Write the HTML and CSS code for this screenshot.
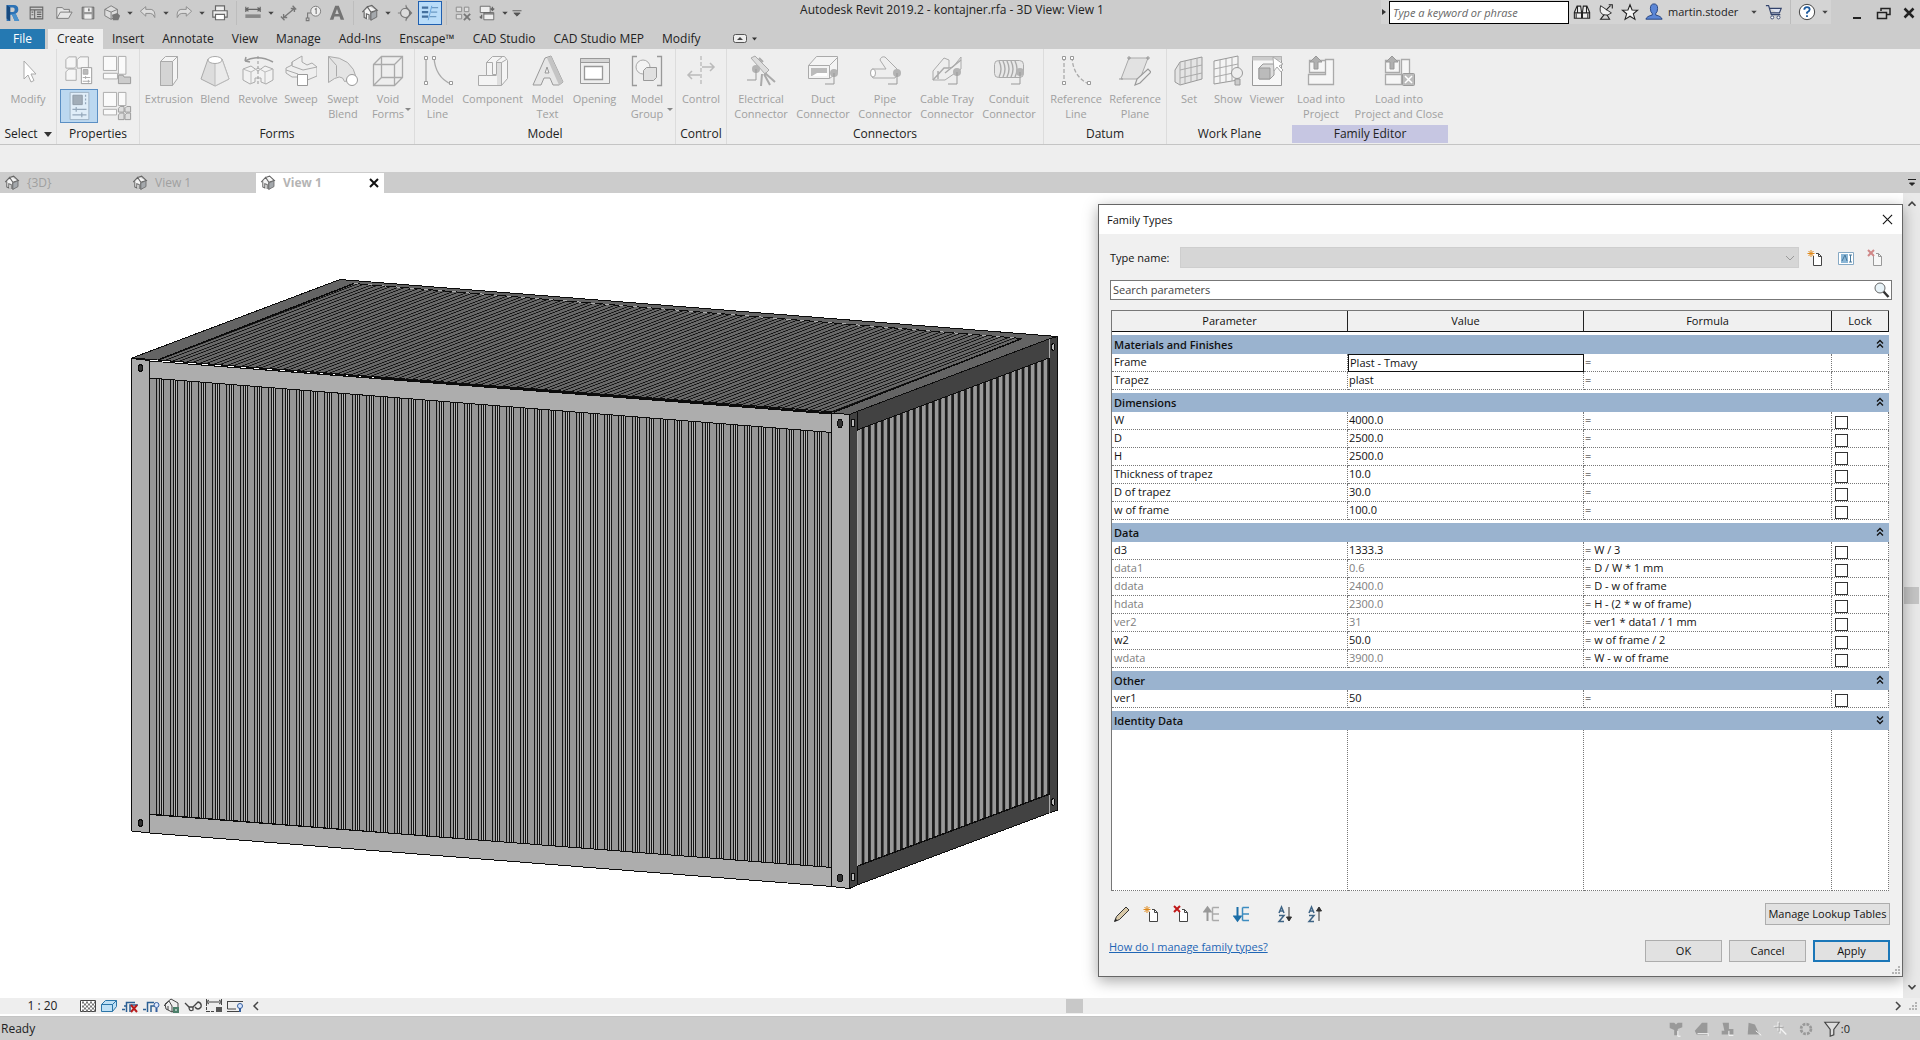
FILE: index.html
```html
<!DOCTYPE html>
<html lang="en">
<head>
<meta charset="utf-8">
<title>Autodesk Revit 2019.2 - kontajner.rfa - 3D View: View 1</title>
<link rel="stylesheet" href="styles.css">
</head>
<body>
<svg class="defs" aria-hidden="true">
  <symbol id="caret" viewBox="0 0 12 20"><path d="M3 8.500h6l-3 3.500z" fill="#444"/></symbol>
  <symbol id="house" viewBox="0 0 20 20"><path d="M3 8l7-5 7 4v7l-7 4-6-3z" fill="#f4f4f4"/><path d="M1.500 9L7 3l4 6v9M7 3l5-1.500L18 7l-7 2M3.500 8v7l2.500 1.200V11l3 1v5.500" fill="none" stroke="#666" stroke-width="1.300"/><path d="M11 10l6.500-3v7.500L11 18z" fill="#a4a8ac" stroke="#666"/></symbol>
  <symbol id="up2" viewBox="0 0 10 12"><path d="M2 5.500l3-3 3 3M2 9.500l3-3 3 3" fill="none" stroke="#111" stroke-width="1.300"/></symbol>
  <symbol id="page" viewBox="0 0 18 18"><path d="M6.500 4.500h5l3 3v9h-8z" fill="#fff"/><path d="M6.500 7v9.500h8v-9l-3-3H9M11.500 4.500v3h3" fill="none" stroke="#444"/></symbol>
  <symbol id="grip" viewBox="0 0 10 10"><path d="M7 1h2v2h-2zM4 4h2v2h-2zM7 4h2v2h-2zM1 7h2v2h-2zM4 7h2v2h-2zM7 7h2v2h-2z" fill="#b4b4b4"/></symbol>
</svg>

<header class="titlebar">
  <div class="qat">
    <button aria-label="Revit"><svg viewBox="0 0 20 20"><path d="M4 1h8q5 0 5 5 0 3.500-3 4.500l4 8.500h-5l-3-7H8v7H4zM8 4v5h3q2 0 2-2.500T11 4z" fill="#2d72b5"/><path d="M4 1l4 3v15l-4-3z" fill="#174a80"/><path d="M8 12l2 0 3 7h5l-4-8.500z" fill="#4b91cc"/></svg></button>
    <button aria-label="Home"><svg viewBox="0 0 20 20"><path d="M3.500 3.500h14v13h-14zM3.500 6.500h14M8.500 7v9.500M11 9h5M11 11.500h5M11 14h5M5 9h2M5 12h2" fill="none" stroke="#666" stroke-width="1.200"/></svg></button>
    <span class="sp"></span>
    <button aria-label="Open"><svg viewBox="0 0 20 20"><path d="M2 16V4h6l2 2h6v3M2 16l4-7h13l-4 7z" fill="#e6e6e6" stroke="#777"/></svg></button>
    <button aria-label="Save"><svg viewBox="0 0 20 20"><path d="M3.500 3.500h13v13h-13z" fill="#999" stroke="#666"/><path d="M6 4h8v5H6zM6 11.500h8v5H6z" fill="#eee"/><path d="M11 5v3" stroke="#666" stroke-width="1.500"/></svg></button>
    <button aria-label="Synchronize"><svg viewBox="0 0 20 20"><path d="M2 6l7-4 7 4v7l-7 4-7-4z" fill="#ddd" stroke="#777"/><path d="M2 6l7 3 7-3M9 9v8" fill="none" stroke="#777"/><path d="M10 12l6-2 3 3-2 5h-6z" fill="#777"/></svg></button>
    <button class="dd" aria-label="Synchronize options"><svg><use href="#caret"/></svg></button>
    <button aria-label="Undo"><svg viewBox="0 0 20 20"><path d="M1.500 8l6-5v3h6q5 1 4 9-2-5-5-4.500h-5v3z" fill="#ddd" stroke="#888"/></svg></button>
    <button class="dd" aria-label="Undo list"><svg><use href="#caret"/></svg></button>
    <button aria-label="Redo"><svg viewBox="0 0 20 20"><path d="M18.500 8l-6-5v3h-6q-5 1-4 9 2-5 5-4.500h5v3z" fill="#ddd" stroke="#888"/></svg></button>
    <button class="dd" aria-label="Redo list"><svg><use href="#caret"/></svg></button>
    <button aria-label="Print"><svg viewBox="0 0 20 20"><path d="M5 7V2h10v5M2 7.500h16v7H2z" fill="#eee" stroke="#666" stroke-width="1.300"/><path d="M5 11.500h10v6H5z" fill="#fff" stroke="#666" stroke-width="1.300"/></svg></button>
    <span class="sep"></span>
    <button aria-label="Measure"><svg viewBox="0 0 20 20"><path d="M2 6h16M2 3v6M18 3v6M5 4L2 6l3 2M15 4l3 2-3 2" fill="none" stroke="#666" stroke-width="1.300"/><path d="M1.500 11.500h17v4h-17z" fill="#888"/></svg></button>
    <button class="dd" aria-label="Measure options"><svg><use href="#caret"/></svg></button>
    <button aria-label="Aligned dimension"><svg viewBox="0 0 20 20"><path d="M4 15L16 5M4 11v4h4M12 5h4v4M1 14l4 4M14 2l4 4" fill="none" stroke="#777" stroke-width="1.500"/></svg></button>
    <button aria-label="Tag"><svg viewBox="0 0 20 20"><circle cx="13" cy="8" r="5.500" fill="#eee" stroke="#777"/><path d="M12 6l1.500-1v6M7.500 10H4v6M2.500 15.500h3v3h-3z" fill="none" stroke="#777" stroke-width="1.200"/></svg></button>
    <button aria-label="Text"><svg viewBox="0 0 20 20"><path d="M2 17.500L8 2h4l6 15.500h-4l-1.200-3.500H7.200L6 17.500zM8 11h4l-2-5.500z" fill="#747474"/></svg></button>
    <span class="sep"></span>
    <button aria-label="Default 3D view"><svg><use href="#house"/></svg></button>
    <button class="dd" aria-label="3D view options"><svg><use href="#caret"/></svg></button>
    <button aria-label="Section"><svg viewBox="0 0 20 20"><path d="M10 2l7 8-7 8z" fill="#777"/><circle cx="9" cy="10" r="5" fill="#ddd" stroke="#777" stroke-width="1.300"/><path d="M1 10h3M10 1v3M10 16v3" stroke="#777"/></svg></button>
    <button class="on" aria-label="Thin lines"><svg viewBox="0 0 20 20"><path d="M1 4h7M1 9h7M1 14h7" stroke="#446f9d" stroke-width="2.500"/><path d="M12 4h7M11 9h7M10 14h7" stroke="#6d9ac4" stroke-width="1.200"/><path d="M12 2l-4 16" stroke="#5c9bd5"/></svg></button>
    <span class="sep"></span>
    <button aria-label="Close inactive views"><svg viewBox="0 0 20 20"><path d="M2.500 3.500h6v5h-6zM11.500 3.500h5v5h-5zM2.500 11.500h6v5h-6z" fill="#ddd" stroke="#888"/><path d="M11 11l7 7M18 11l-7 7" stroke="#777" stroke-width="2"/></svg></button>
    <button aria-label="Switch windows"><svg viewBox="0 0 20 20"><path d="M2.500 2.500h11v7h-11zM6.500 9.500h11v8h-11z" fill="#eee" stroke="#666"/><path d="M6.500 11h11M16 3v4M14 5l2 2 2-2M4 12v4M2 14l2 2" fill="none" stroke="#666" stroke-width="1.500"/></svg></button>
    <button class="dd" aria-label="Window list"><svg><use href="#caret"/></svg></button>
    <button class="dd" aria-label="Customize"><svg viewBox="0 0 12 20"><path d="M1 7.500h10M2.500 10h7L6 13.500z" fill="#555" stroke="#555"/></svg></button>
  </div>
  <h1 class="doc-title">Autodesk Revit 2019.2 - kontajner.rfa - 3D View: View 1</h1>
  <div class="account">
    <svg class="tri" viewBox="0 0 6 8"><path d="M1 1l4 3-4 3z" fill="#333"/></svg>
    <input class="keyword" type="text" placeholder="Type a keyword or phrase" aria-label="Type a keyword or phrase">
    <button aria-label="Search"><svg viewBox="0 0 20 20"><path d="M4.500 3.500h4l1 7v6.500h-8v-6.500zM11.500 3.500h4l3 7v6.500h-8v-6.500zM1.500 11h8M10.500 11h8M5 3v8M15 3v8M3.500 12v5M16.500 12v5" fill="#eee" stroke="#222" stroke-width="1.200"/></svg></button>
    <button aria-label="Communication center"><svg viewBox="0 0 20 20"><path d="M4 3q-2 8 3 10t9-2z" fill="#eee" stroke="#222"/><path d="M10 8l5-5M8 13l-4 5h10l-3-5M13 2h4v4" fill="none" stroke="#222" stroke-width="1.200"/></svg></button>
    <button aria-label="Favorites"><svg viewBox="0 0 20 20"><path d="M10 2l2.300 5.700 6.200.3-4.800 4 1.800 6.200L10 14.700l-5.500 3.500L6.300 12l-4.800-4 6.200-.3z" fill="#f4f4f4" stroke="#222" stroke-width="1.200"/></svg></button>
    <button aria-label="Signed in user"><svg viewBox="0 0 20 20"><path d="M6 6q0-5 4-5t4 5q0 4-2 5.500v2q6 1 7 4.500H1q1-3.500 7-4.500v-2Q6 10 6 6z" fill="#5b86d6" stroke="#1f3e7c"/></svg></button>
    <button class="user">martin.stoder</button>
    <button class="dd" aria-label="Account options"><svg><use href="#caret"/></svg></button>
    <button aria-label="App store"><svg viewBox="0 0 20 20"><path d="M1 3h3l3 10h10M5 6h13l-2 5H6.500" fill="#dde3f2" stroke="#33436b" stroke-width="1.300"/><circle cx="8" cy="16" r="1.700" fill="#fff" stroke="#33436b"/><circle cx="15" cy="16" r="1.700" fill="#fff" stroke="#33436b"/></svg></button>
    <span class="sep"></span>
    <button aria-label="Help"><svg viewBox="0 0 20 20"><circle cx="10" cy="10" r="8.500" fill="#fff" stroke="#333"/><path d="M7 7.500q0-3 3-3t3 2.800q0 1.700-3 3.200v1.500M10 13.500v2" fill="none" stroke="#1c5a9e" stroke-width="2"/></svg></button>
    <button class="dd" aria-label="Help options"><svg><use href="#caret"/></svg></button>
  </div>
  <div class="winctl">
    <button aria-label="Minimize"><svg viewBox="0 0 20 20"><path d="M6 15h8" stroke="#222" stroke-width="2"/></svg></button>
    <button aria-label="Restore"><svg viewBox="0 0 20 20"><path d="M8 8V5.500h9v6h-3M4.500 9.500h9v6h-9z" fill="none" stroke="#222" stroke-width="1.500"/></svg></button>
    <button aria-label="Close"><svg viewBox="0 0 20 20"><path d="M5.500 5.500l9 9M14.500 5.500l-9 9" stroke="#222" stroke-width="2.500"/></svg></button>
  </div>
</header>

<nav class="tabs">
  <button class="file">File</button>
  <button class="current">Create</button>
  <button>Insert</button>
  <button>Annotate</button>
  <button>View</button>
  <button>Manage</button>
  <button>Add-Ins</button>
  <button>Enscape™</button>
  <button>CAD Studio</button>
  <button>CAD Studio MEP</button>
  <button>Modify</button>
  <button class="fold" aria-label="Minimize ribbon"><svg viewBox="0 0 28 12"><rect x="1.500" y="1.500" width="13" height="8" rx="2" fill="#eee" stroke="#555"/><path d="M5 7l3-3 3 3z" fill="#444"/><path d="M20 4.500h5l-2.500 3z" fill="#333"/></svg></button>
</nav>

<section class="ribbon">
  <div class="panel select">
    <div class="tools"><button><svg viewBox="0 0 32 32"><path d="M12 6v18l4-4 3 7 3-1.500-3-6.500h5z" fill="#fff" stroke="#aaa"/></svg>Modify</button></div>
    <h2>Select <svg class="sel-caret" viewBox="0 0 8 6"><path d="M0 0h8L4 5z" fill="#333"/></svg></h2>
  </div>
  <div class="panel properties">
    <div class="tools">
      <button aria-label="Family category"><svg viewBox="0 0 32 32"><path d="M2 5l3-3h8v10l-2 2H2zM14 5l3-3h9v12H14zM2 18l3-3h8v12H2z" fill="#f6f6f6" stroke="#aaa"/><path d="M18.500 13.500h11v17h-11z" fill="#fff" stroke="#999"/><path d="M20.500 15.500h5v5h-5z" fill="#bbb" stroke="#aaa"/><path d="M20 24h8M20 28h8M23 22.500v3M26 26.500v3" stroke="#aaa"/></svg></button>
      <button aria-label="Family types"><svg viewBox="0 0 32 32"><path d="M1.500 1.500h14v15h-14zM17.500 1.500h8v19h-8zM1.500 19.500h15v6h-15z" fill="#fafafa" stroke="#aaa"/><path d="M17.500 21.500h5l1 2h7v7h-13z" fill="#ccc" stroke="#999"/></svg></button>
      <button class="on" aria-label="Properties"><svg viewBox="0 0 32 32"><path d="M6.500 1.500h20v29h-20z" fill="#e0edf8" stroke="#9db0c2"/><path d="M9.500 4.500h10v10h-10z" fill="#a2adb8" stroke="#8f9ba8"/><path d="M23 4v2M23 8v2M23 12v2M9 19.500h15M9 25.500h15M13 17v5M19 23v5" stroke="#94a7ba" stroke-width="1.300"/></svg></button>
      <button aria-label="Type properties"><svg viewBox="0 0 32 32"><path d="M1.500 1.500h14v15h-14zM17.500 1.500h8v14h-8zM1.500 19.500h14v6h-14z" fill="#fafafa" stroke="#aaa"/><path d="M17.500 18.500l2-2h4v6h-6zM24.500 18.500l2-2h4v6h-6zM17.500 25.500l2-2h4v7h-6zM24.500 25.500l2-2h4v7h-6z" fill="#ddd" stroke="#999"/></svg></button>
    </div>
    <h2>Properties</h2>
  </div>
  <div class="panel forms">
    <div class="tools">
      <button><svg viewBox="0 0 32 32"><path d="M7.500 6.500l5-5h12v22l-5 7h-12z" fill="#f4f4f4" stroke="#aaa"/><path d="M7.500 6.500h12v24h-12z" fill="#d4d4d4" stroke="#aaa"/><path d="M19.500 6.500l5-5" stroke="#aaa"/></svg>Extrusion</button>
      <button><svg viewBox="0 0 32 32"><path d="M9 4l-7 20 14 7 14-7L23 4z" fill="#ddd" stroke="#aaa"/><path d="M16 8v23l14-7-7-20z" fill="#ebebeb" stroke="#bbb"/><ellipse cx="16" cy="5" rx="7" ry="3.500" fill="#fff" stroke="#aaa"/></svg>Blend</button>
      <button><svg viewBox="0 0 32 32"><path d="M1 14l8-3 7 5 7-5 8 3v11l-7 4-5-2v-4h-6v4l-5 2-7-4z" fill="#f2f2f2" stroke="#aaa"/><path d="M9 17v12M23 17v12M1 14l8 3 7-4 7 4 8-3" fill="none" stroke="#bbb"/><path d="M3 6q13-7 28 1M3 6l1-4M3 6l5 1" fill="none" stroke="#999" stroke-width="1.500"/><path d="M16 1v30" stroke="#999" stroke-dasharray="3 2"/></svg>Revolve</button>
      <button><svg viewBox="0 0 32 32"><path d="M7 7l10-6v6l5 3 5-2 5 4v9l-12 5-6-4h-7L1 18v-5l6-3z" fill="#efefef" stroke="#aaa"/><path d="M7 7v4l11 4 14-3M1 15l12 4" fill="none" stroke="#aaa"/><path d="M12.500 19.500h10v11h-10z" fill="#fff" stroke="#999"/></svg>Sweep</button>
      <button><svg viewBox="0 0 32 32"><path d="M1.500 1.500q24 1 28 22l-12 3Q15 17 1.500 27.500z" fill="#e4e4e4" stroke="#aaa"/><path d="M1.500 1.500l8 9v11" fill="none" stroke="#aaa"/><circle cx="25" cy="25" r="5.500" fill="#fff" stroke="#999"/></svg>Swept<br>Blend</button>
      <button class="drop"><svg viewBox="0 0 32 32"><path d="M1.500 9.500l8-8h21v21l-8 8h-21zM1.500 9.500h21v21M22.500 9.500l8-8M9.500 1.500v21h21M9.500 22.500l-8 8" fill="none" stroke="#aaa" stroke-width="1.300"/></svg>Void<br>Forms</button>
    </div>
    <h2>Forms</h2>
  </div>
  <div class="panel model">
    <div class="tools">
      <button><svg viewBox="0 0 32 32"><path d="M4 2v27M12 2q1 20 17 27" fill="none" stroke="#aaa" stroke-width="1.300"/><path d="M2.500 1.500h3v3h-3zM2.500 26.500h3v3h-3zM10.500 1.500h3v3h-3zM27.500 26.500h3v3h-3z" fill="#fff" stroke="#999"/></svg>Model<br>Line</button>
      <button><svg viewBox="0 0 32 32"><path d="M1.500 30.500v-10h8v-13l6-6h12l3 4v18l-6 7z" fill="#f4f4f4" stroke="#aaa"/><path d="M9.500 7.500h6v12h4v-13l6-5M19.500 7.500h5v23M24.500 7.500l5-3M9.500 20.500h10" fill="none" stroke="#aaa"/><path d="M20 8h4v22h-4z" fill="#dedede"/></svg>Component</button>
      <button><svg viewBox="0 0 32 32"><path d="M1 30L13 3l6-2 12 26-4 3h-6l-3-7h-6l-3 7zM13 18h4l-2-6z" fill="#e6e6e6" stroke="#999"/><path d="M19 1l12 26-4 3L15 3z" fill="#c4c4c4"/></svg>Model<br>Text</button>
      <button><svg viewBox="0 0 32 32"><path d="M1.500 3.500h29v25h-29z" fill="#eee" stroke="#999"/><path d="M1.500 3.500h29v4h-29z" fill="#d4d4d4" stroke="#999"/><path d="M5.500 11.500h18v13h-18z" fill="#fff" stroke="#999" stroke-width="1.300"/></svg>Opening</button>
      <button class="drop"><svg viewBox="0 0 32 32"><path d="M6 1.500H1.500v29H6M26 1.500h4.500v29H26" fill="none" stroke="#999" stroke-width="1.300"/><circle cx="12" cy="12" r="7" fill="#f4f4f4" stroke="#aaa"/><path d="M12.500 15.500l3-3h10v10l-3 3h-10z" fill="#e0e0e0" stroke="#999"/></svg>Model<br>Group</button>
    </div>
    <h2>Model</h2>
  </div>
  <div class="panel control">
    <div class="tools"><button><svg viewBox="0 0 32 32"><path d="M16 1v30" stroke="#aaa" stroke-dasharray="4 2"/><path d="M17 12h12M25 8l4 4-4 4M15 20H3M7 16l-4 4 4 4" fill="none" stroke="#bbb" stroke-width="1.500"/></svg>Control</button></div>
    <h2>Control</h2>
  </div>
  <div class="panel connectors">
    <div class="tools">
      <button><svg viewBox="0 0 32 32"><path d="M6 3l4-2 14 14-4 4z" fill="#ddd" stroke="#aaa"/><path d="M20 18l10 9M19 19l6 11M17 19l-1 12M14 3l4 4" stroke="#aaa" stroke-width="2"/><circle cx="11" cy="14" r="4" fill="#b4b4b4"/><path d="M11 14v11H2" fill="none" stroke="#999"/></svg>Electrical<br>Connector</button>
      <button><svg viewBox="0 0 32 32"><path d="M1.500 10.500l8-9h21v16l-8 6h-21z" fill="#f4f4f4" stroke="#aaa"/><path d="M1.500 10.500h21v13M22.500 10.500l8-8" fill="none" stroke="#aaa"/><path d="M4 13h16v8H4z" fill="#bbb"/><path d="M10 18h10v3H5z" fill="#fff"/><circle cx="27" cy="18" r="4" fill="#b4b4b4"/><path d="M27 18v11h-9" fill="none" stroke="#999"/></svg>Duct<br>Connector</button>
      <button><svg viewBox="0 0 32 32"><path d="M3 14h14L11 5q1-4 5-3l14 14-4 7H4q-4-4-1-9z" fill="#eee" stroke="#aaa"/><ellipse cx="4" cy="18" rx="2.500" ry="4" fill="#fff" stroke="#aaa"/><circle cx="28" cy="18" r="4" fill="#b4b4b4"/><path d="M28 18v11h-9" fill="none" stroke="#999"/></svg>Pipe<br>Connector</button>
      <button><svg viewBox="0 0 32 32"><path d="M2 16L13 3l5 2v8l4-1 8-10v12L14 25H2z" fill="#eee" stroke="#aaa"/><path d="M2 25L13 13l5 0M7 16v8M14 18l16-13" fill="none" stroke="#aaa" stroke-width="1.400"/><circle cx="26" cy="17" r="4" fill="#b4b4b4"/><path d="M26 17v12h-9" fill="none" stroke="#999"/></svg>Cable Tray<br>Connector</button>
      <button><svg viewBox="0 0 32 32"><rect x="1.500" y="5.500" width="29" height="17" rx="4" fill="#e8e8e8" stroke="#aaa"/><path d="M6 6q4 8 0 16M10 6q4 8 0 16M14 6q4 8 0 16M18 6q4 8 0 16M22 6q4 8 0 16" fill="none" stroke="#aaa" stroke-width="1.400"/><circle cx="27" cy="17" r="4" fill="#b4b4b4"/><path d="M27 17v12h-9" fill="none" stroke="#999"/></svg>Conduit<br>Connector</button>
    </div>
    <h2>Connectors</h2>
  </div>
  <div class="panel datum">
    <div class="tools">
      <button><svg viewBox="0 0 32 32"><path d="M4 2v27M12 2q1 20 17 27" fill="none" stroke="#aaa" stroke-width="1.300" stroke-dasharray="4 2"/><path d="M2.500 1.500h3v3h-3zM2.500 26.500h3v3h-3zM10.500 1.500h3v3h-3zM27.500 26.500h3v3h-3z" fill="#fff" stroke="#999"/></svg>Reference<br>Line</button>
      <button><svg viewBox="0 0 32 32"><path d="M10 3h19l-8 21H2z" fill="#e2e2e2" stroke="#aaa"/><path d="M8 3h4M10 1v4M27 3h4M29 1v4M0 24h4" stroke="#999"/><path d="M16 30l2-6L29 14l3 3-11 11z" fill="#eee" stroke="#999" stroke-width="1.200"/></svg>Reference<br>Plane</button>
    </div>
    <h2>Datum</h2>
  </div>
  <div class="panel workplane">
    <div class="tools">
      <button><svg viewBox="0 0 32 32"><path d="M2 15l5-8 22-5v22L7 30l-5-3z" fill="#e4e4e4" stroke="#999"/><path d="M7 7v23M12 6v22M18 5v22M24 3v22M7 15l22-5M7 23l22-5" fill="none" stroke="#aaa"/></svg>Set</button>
      <button><svg viewBox="0 0 32 32"><path d="M2 6l24-5v24L2 29z" fill="#f4f4f4" stroke="#999"/><path d="M8 5v23M14 4v23M20 3v23M2 14l24-5M2 22l24-5" stroke="#aaa"/><circle cx="25" cy="18" r="5.500" fill="#eee" stroke="#999"/><path d="M23 24h5v6h-5z" fill="#ccc" stroke="#999"/></svg>Show</button>
      <button><svg viewBox="0 0 32 32"><path d="M1.500 1.500h29v29h-29z" fill="#f7f7f7" stroke="#999"/><path d="M1.500 1.500h29v4h-29z" fill="#ccc"/><path d="M8 13l4-4h11v11l-4 4H8z" fill="#ddd" stroke="#999"/><path d="M8 13h11v11H8z" fill="#bbb" stroke="#999"/><path d="M22 2l1 14 3-4 4 5 2-2-4-4 4-2z" fill="#fff" stroke="#aaa"/></svg>Viewer</button>
    </div>
    <h2>Work Plane</h2>
  </div>
  <div class="panel editor">
    <div class="tools">
      <button><svg viewBox="0 0 32 32"><path d="M4.500 5.500h16v12h-16zM20.500 4.500h8v25h-25v-10h17z" fill="#f6f6f6" stroke="#aaa" stroke-width="1.300"/><path d="M11 1l6 6h-4v7H9V7H5z" fill="#b0b0b0" stroke="#999"/></svg>Load into<br>Project</button>
      <button><svg viewBox="0 0 32 32"><path d="M2.500 5.500h14v12h-14zM18.500 4.500h8v16h-8zM2.500 19.500h16v10h-16z" fill="#f6f6f6" stroke="#aaa" stroke-width="1.300"/><path d="M9 1l6 6h-4v7H7V7H3z" fill="#b0b0b0" stroke="#999"/><rect x="19.500" y="18.500" width="12" height="12" rx="1" fill="#bbb" stroke="#999"/><path d="M22 21l7 7M29 21l-7 7" stroke="#fff" stroke-width="1.500"/></svg>Load into<br>Project and Close</button>
    </div>
    <h2>Family Editor</h2>
  </div>
</section>

<div class="options"></div>

<div class="viewtabs">
  <button><svg><use href="#house"/></svg>{3D}</button>
  <button><svg><use href="#house"/></svg>View 1</button>
  <button class="current"><svg><use href="#house"/></svg>View 1<svg class="x" viewBox="0 0 12 12"><path d="M2 2l8 8M10 2l-8 8" stroke="#111" stroke-width="2"/></svg></button>
  <svg class="more" viewBox="0 0 12 12"><path d="M2 2.500h8M3.500 6h5L6 8.500z" fill="#222" stroke="#222"/></svg>
</div>

<main class="canvas">
  <svg class="model-view" viewBox="130 278 930 613" role="img" aria-label="3D view of the container">
    <defs>
      <pattern id="wall" patternUnits="userSpaceOnUse" x="149" y="0" width="14" height="20">
        <rect width="14" height="20" fill="#b4b4b4"/><rect width="10" height="20" fill="#979797"/>
        <path d="M0.500 0v20M7.500 0v20M10.500 0v20M12.500 0v20" stroke="#151515"/>
      </pattern>
      <pattern id="roof" patternUnits="userSpaceOnUse" width="13.700" height="300" patternTransform="matrix(1 .0777 1 -.383 158 359)">
        <rect width="14" height="300" fill="#686868"/><rect x="2" width="2" height="300" fill="#111"/><rect x="8" width="2" height="300" fill="#111"/>
      </pattern>
      <pattern id="side" patternUnits="userSpaceOnUse" x="858" y="0" width="6.400" height="20">
        <rect width="6.400" height="20" fill="#999"/><rect x="4" width="2.400" height="20" fill="#1c1c1c"/>
      </pattern>
    </defs>
    <g stroke="#0c0c0c" stroke-width="1" stroke-linejoin="round">
      <path d="M132 358L340 279.500 1057 336.500 850 414.500z" fill="#646464"/>
      <path d="M158 360L354 283.500 1022 338.500 834 412z" fill="url(#roof)"/>
      <path d="M354 283.500L1022 338.500" stroke="#aaa" stroke-dasharray="4 10"/>
      <path d="M158 360L354 283.500M834 412L1022 338.500" stroke-width="1.500"/>
      <path d="M149 361L832 413" fill="none"/>
      <path d="M149 378h1l682 54v436l-683-54z" fill="url(#wall)"/>
      <path d="M857 430l192-72v436l-192 72z" fill="url(#side)"/>
      <path d="M149.500 361L832 414v18.500L149.500 378zM149.500 814.500L832 867.500v19L149.500 833z" fill="#adadad"/>
      <path d="M857 411.500l192-72.500v19l-192 72zM857 866.500l192-72v18.500l-192 72z" fill="#424242"/>
      <path d="M131.500 358.500l18 2V833l-18-2zM831.500 413l18 1.500V888.500l-18-2z" fill="#adadad"/>
      <path d="M849.500 414.500l7.500-3V885l-7.500 3.500zM1049 339l8.500-2.500V810l-8.500 3z" fill="#424242"/>
      <path d="M857 431v435M1049 339v19M1049 795v18" stroke="#aaa"/>
      <g fill="#333"><ellipse cx="140.500" cy="368" rx="2" ry="3.500"/><ellipse cx="140.500" cy="823" rx="2" ry="3.500"/><ellipse cx="840" cy="423.500" rx="2.500" ry="4"/><ellipse cx="840" cy="878" rx="2.500" ry="4"/></g>
      <g fill="#bbb"><ellipse cx="853" cy="423" rx="2" ry="4"/><ellipse cx="853" cy="877" rx="2" ry="4"/><ellipse cx="1053" cy="347" rx="1.500" ry="3.500"/><ellipse cx="1053" cy="802" rx="1.500" ry="3.500"/></g>
    </g>
  </svg>
  <div class="vscroll">
    <svg viewBox="0 0 16 16"><path d="M4 10l4-4 4 4" fill="none" stroke="#444" stroke-width="2"/></svg>
    <span class="thumb"></span>
    <svg viewBox="0 0 16 16"><path d="M4 6l4 4 4-4" fill="none" stroke="#444" stroke-width="2"/></svg>
  </div>

  <form class="dialog" role="dialog" aria-labelledby="dlg-title">
    <header><h2 id="dlg-title">Family Types</h2><button type="button" aria-label="Close"><svg viewBox="0 0 12 12"><path d="M1 1l10 10M11 1L1 11" stroke="#111" stroke-width="1.200"/></svg></button></header>
    <div class="typename">
      <label for="type">Type name:</label>
      <div class="selwrap"><select id="type" disabled><option></option></select><svg viewBox="0 0 10 8"><path d="M1 2l4 4 4-4" fill="none" stroke="#999"/></svg></div>
      <button type="button" aria-label="New type"><svg viewBox="0 0 18 18"><use href="#page"/><path d="M4 1v7M.5 4.500h7M1.500 2l5 5M6.500 2l-5 5" stroke="#e08a1c"/></svg></button>
      <button type="button" aria-label="Rename type"><svg viewBox="0 0 18 18"><path d="M1.500 3.500h15v12h-15z" fill="#fff" stroke="#86a9c4"/><path d="M4 5h7v9H4z" fill="#8ab6d6"/><path d="M12 6h3M12 13h3M13.500 6v7M5 12l3-6 2 6" fill="none" stroke="#47789c"/></svg></button>
      <button type="button" class="dim" aria-label="Delete type"><svg viewBox="0 0 18 18"><use href="#page"/><path d="M1 1l6 6M7 1L1 7" stroke="#b02020" stroke-width="2"/></svg></button>
    </div>
    <div class="search"><input type="text" placeholder="Search parameters" aria-label="Search parameters"><svg viewBox="0 0 18 18"><path d="M10.500 10.500l5 5.500" stroke="#333" stroke-width="2.500"/><circle cx="7" cy="7" r="5" fill="#e8f3f8" stroke="#666"/></svg></div>
    <div class="grid">
      <table>
        <colgroup><col class="c-par"><col class="c-val"><col class="c-for"><col class="c-lock"></colgroup>
        <thead><tr><th>Parameter</th><th>Value</th><th>Formula</th><th>Lock</th></tr></thead>
        <tbody>
          <tr class="group"><th colspan="4">Materials and Finishes<svg><use href="#up2"/></svg></th></tr>
          <tr><td>Frame</td><td class="editing">Plast - Tmavy</td><td>=</td><td></td></tr>
          <tr><td>Trapez</td><td>plast</td><td>=</td><td></td></tr>
        </tbody>
        <tbody>
          <tr class="group"><th colspan="4">Dimensions<svg><use href="#up2"/></svg></th></tr>
          <tr><td>W</td><td>4000.0</td><td>=</td><td><input type="checkbox" aria-label="Lock W"></td></tr>
          <tr><td>D</td><td>2500.0</td><td>=</td><td><input type="checkbox" aria-label="Lock D"></td></tr>
          <tr><td>H</td><td>2500.0</td><td>=</td><td><input type="checkbox" aria-label="Lock H"></td></tr>
          <tr><td>Thickness of trapez</td><td>10.0</td><td>=</td><td><input type="checkbox" aria-label="Lock Thickness of trapez"></td></tr>
          <tr><td>D of trapez</td><td>30.0</td><td>=</td><td><input type="checkbox" aria-label="Lock D of trapez"></td></tr>
          <tr><td>w of frame</td><td>100.0</td><td>=</td><td><input type="checkbox" aria-label="Lock w of frame"></td></tr>
        </tbody>
        <tbody>
          <tr class="group"><th colspan="4">Data<svg><use href="#up2"/></svg></th></tr>
          <tr><td>d3</td><td>1333.3</td><td>= W / 3</td><td><input type="checkbox" aria-label="Lock d3"></td></tr>
          <tr class="calc"><td>data1</td><td>0.6</td><td>= D / W * 1 mm</td><td><input type="checkbox" aria-label="Lock data1"></td></tr>
          <tr class="calc"><td>ddata</td><td>2400.0</td><td>= D - w of frame</td><td><input type="checkbox" aria-label="Lock ddata"></td></tr>
          <tr class="calc"><td>hdata</td><td>2300.0</td><td>= H - (2 * w of frame)</td><td><input type="checkbox" aria-label="Lock hdata"></td></tr>
          <tr class="calc"><td>ver2</td><td>31</td><td>= ver1 * data1 / 1 mm</td><td><input type="checkbox" aria-label="Lock ver2"></td></tr>
          <tr><td>w2</td><td>50.0</td><td>= w of frame / 2</td><td><input type="checkbox" aria-label="Lock w2"></td></tr>
          <tr class="calc"><td>wdata</td><td>3900.0</td><td>= W - w of frame</td><td><input type="checkbox" aria-label="Lock wdata"></td></tr>
        </tbody>
        <tbody>
          <tr class="group"><th colspan="4">Other<svg><use href="#up2"/></svg></th></tr>
          <tr><td>ver1</td><td>50</td><td>=</td><td><input type="checkbox" aria-label="Lock ver1"></td></tr>
        </tbody>
        <tbody>
          <tr class="group"><th colspan="4">Identity Data<svg class="flip"><use href="#up2"/></svg></th></tr>
          <tr class="blank"><td></td><td></td><td></td><td></td></tr>
        </tbody>
      </table>
    </div>
    <div class="actions">
      <button type="button" aria-label="Edit parameter"><svg viewBox="0 0 18 18"><path d="M1.500 16.500l2-5L13 2l3 3-9.500 9.500z" fill="#d9c9a8" stroke="#333"/><path d="M1.500 16.500l1-3 2 2z" fill="#222"/></svg></button>
      <button type="button" aria-label="New parameter"><svg viewBox="0 0 18 18"><use href="#page"/><path d="M4 1v7M.5 4.500h7M1.500 2l5 5M6.500 2l-5 5" stroke="#e08a1c"/></svg></button>
      <button type="button" aria-label="Delete parameter"><svg viewBox="0 0 18 18"><use href="#page"/><path d="M1 1l6 6M7 1L1 7" stroke="#c01818" stroke-width="2"/></svg></button>
      <button type="button" aria-label="Move up"><svg viewBox="0 0 18 18"><path d="M4.500 16V4M1.500 6.500l3-4 3 4z" fill="#999" stroke="#999" stroke-width="2"/><path d="M9.500 2.500v13M9.500 2.500H16M9.500 9H16M9.500 15.500H16" stroke="#aaa" stroke-width="1.500"/></svg></button>
      <button type="button" aria-label="Move down"><svg viewBox="0 0 18 18"><path d="M4.500 2v12M1.500 11.500l3 4 3-4z" fill="#1b6ea8" stroke="#1b6ea8" stroke-width="2"/><path d="M9.500 2.500v13M9.500 2.500H16M9.500 9H16M9.500 15.500H16" stroke="#3c8cc0" stroke-width="1.500"/></svg></button>
      <button type="button" class="sort" aria-label="Sort ascending"><svg viewBox="0 0 18 18"><path d="M3 8l2.500-6L8 8M4 6h3M3 10.500h5l-5 6h5" fill="none" stroke="#3f6485" stroke-width="1.500"/><path d="M13 2v13M10.500 12l2.500 4 2.500-4z" fill="#333" stroke="#333"/></svg></button>
      <button type="button" aria-label="Sort descending"><svg viewBox="0 0 18 18"><path d="M3 8l2.500-6L8 8M4 6h3M3 10.500h5l-5 6h5" fill="none" stroke="#3f6485" stroke-width="1.500"/><path d="M13 16V3M10.500 6L13 2l2.500 4z" fill="#333" stroke="#333"/></svg></button>
      <button type="button" class="btn lookup">Manage Lookup Tables</button>
    </div>
    <footer>
      <a href="#help">How do I manage family types?</a>
      <button type="button" class="btn">OK</button>
      <button type="button" class="btn">Cancel</button>
      <button type="button" class="btn primary">Apply</button>
    </footer>
    <svg class="grip"><use href="#grip"/></svg>
  </form>
</main>

<div class="viewbar">
  <button class="scale">1 : 20</button>
  <button aria-label="Detail level"><svg viewBox="0 0 18 16"><path d="M1.500 2.500h15v11h-15z" fill="#fff" stroke="#444"/><path d="M3 4.500h13M3 8.500h13M3 12.500h13" stroke="#777" stroke-width="2" stroke-dasharray="2 2"/><path d="M5 6.500h11M5 10.500h11" stroke="#777" stroke-width="2" stroke-dasharray="2 2"/></svg></button>
  <button aria-label="Visual style"><svg viewBox="0 0 18 16"><path d="M1.500 6.500l4-4h11v6l-4 5h-11z" fill="#bfe0f5" stroke="#2b75a8"/><path d="M1.500 6.500h11v7M12.500 6.500l4-4" fill="none" stroke="#2b75a8"/></svg></button>
  <button aria-label="Crop view off"><svg viewBox="0 0 18 16"><path d="M1 11.500h3M5.500 14V4.500H14M3 8h3M9 14V7h8" fill="none" stroke="#2b5f94" stroke-width="1.500"/><path d="M10 7l6 7M16 7l-6 7" stroke="#b81c1c" stroke-width="2"/></svg></button>
  <button aria-label="Hide crop region"><svg viewBox="0 0 18 16"><path d="M1 11.500h3M5.500 14V4.500H12M9 14V8h4" fill="none" stroke="#2b5f94" stroke-width="1.500"/><circle cx="14.500" cy="7" r="2.500" fill="#dbe8ff" stroke="#3560a0"/><path d="M14.500 10v4" stroke="#3560a0" stroke-width="2"/></svg></button>
  <button aria-label="Lock 3D view"><svg viewBox="0 0 18 16"><path d="M2 6l6-5 7 4v6l-6 3-6-3z" fill="#eee" stroke="#444"/><path d="M1 8l5-5 3 5v6M5 12V8" fill="none" stroke="#444"/><path d="M10 9h6v6h-6z" fill="#4b7f6a"/><path d="M12 12h2" stroke="#fff"/></svg></button>
  <button aria-label="Temporary hide"><svg viewBox="0 0 18 16"><path d="M1 5l4 4h4l5-5q4 1 3 5-3 4-6 0M5 9q0 5 4 3V9" fill="none" stroke="#444" stroke-width="1.300"/></svg></button>
  <button aria-label="Reveal constraints"><svg viewBox="0 0 18 16"><path d="M1 4h16M4 2L1 4l3 2M14 2l3 2-3 2" fill="none" stroke="#444"/><path d="M1.500 1v13M16.500 1v6M2 13.500h8" stroke="#444" stroke-dasharray="3 1"/><path d="M11 9h6v5h-6z" fill="#555"/></svg></button>
  <button aria-label="Preview visibility"><svg viewBox="0 0 18 16"><path d="M1 3.500h16M1.500 3v8H10M1 13.500h12" stroke="#444" fill="none"/><circle cx="14" cy="8" r="2.500" fill="#dbe8ff" stroke="#3560a0"/><path d="M14 10v4" stroke="#3560a0" stroke-width="2"/></svg></button>
  <button aria-label="Scroll left" class="narrow"><svg viewBox="0 0 12 16"><path d="M8 4L4 8l4 4" fill="none" stroke="#444" stroke-width="1.500"/></svg></button>
  <div class="track"><span></span></div>
  <button aria-label="Scroll right" class="narrow"><svg viewBox="0 0 12 16"><path d="M4 4l4 4-4 4" fill="none" stroke="#444" stroke-width="1.500"/></svg></button>
  <svg class="grip"><use href="#grip"/></svg>
</div>

<footer class="status">
  <span>Ready</span>
  <div class="filters">
    <svg viewBox="0 0 20 20"><path d="M3 3h5l2 2 2-2h5v5l-5 2v7H8v-6L3 9z" fill="#999"/><path d="M12 12v6h3" stroke="#fff" fill="none"/></svg>
    <svg viewBox="0 0 20 20"><path d="M2 12l8-9h6v13H4z" fill="#999"/><path d="M5 15h12v3" stroke="#eee" fill="none"/></svg>
    <svg viewBox="0 0 20 20"><path d="M4 3h7v7h5v6H3v-4h3z" fill="#999"/><path d="M11 12v5h5" stroke="#fff" fill="none"/></svg>
    <svg viewBox="0 0 20 20"><path d="M4 3l7 2 5 11H3z" fill="#999"/><path d="M12 12l6 5" stroke="#fff"/></svg>
    <svg viewBox="0 0 20 20"><path d="M8 2v10M3 7h10M10 9l7 7M10 9v6" stroke="#f4f4f4" stroke-width="1.500"/><path d="M9 3v10M4 8h10" stroke="#999"/></svg>
    <svg viewBox="0 0 20 20"><circle cx="10" cy="10" r="5.500" fill="none" stroke="#999" stroke-width="3" stroke-dasharray="3 1.300"/></svg>
    <svg viewBox="0 0 20 20"><path d="M2 2.500h16l-6 8v6l-4 1.500v-7.500z" fill="#ddd" stroke="#444" stroke-width="1.300"/></svg>
    <span>:0</span>
  </div>
</footer>
</body>
</html>
```
FILE: styles.css
```css
* { box-sizing: border-box; }
body {
  margin: 0;
  height: 100vh;
  display: flex;
  flex-direction: column;
  overflow: hidden;
  background: #ccc;
  color: #222;
  font: 12px/16px "Open Sans", "Noto Sans", sans-serif;
}
button { border: 0; padding: 0; background: none; font: inherit; color: inherit; }
h1, h2 { margin: 0; font-size: inherit; font-weight: 400; }
svg { display: block; flex: none; }
.defs { position: absolute; width: 0; height: 0; }

.titlebar { display: flex; height: 29px; flex: none; align-items: flex-start; }
.qat { display: flex; align-items: center; height: 25px; flex: none; }
.qat button, .account button { width: 24px; height: 24px; display: grid; place-items: center; flex: none; }
.qat svg, .account svg { width: 18px; height: 18px; }
.qat .dd, .account .dd { width: 12px; }
.dd svg { width: 12px; }
.qat .on { background: #b9dcf9; border: 1px solid #1f5fb0; }
.sp { width: 4px; }
.sep { width: 1px; height: 24px; margin: 0 4px; background: #bdbdbd; }
.doc-title { flex: 1; padding: 2px 0 0; text-align: center; white-space: nowrap; }
.account { display: flex; align-items: center; height: 24px; background: #d4d4d4; margin-right: 16px; }
.account .tri { width: 6px; height: 8px; margin: 0 2px 0 0; }
.keyword { width: 180px; height: 23px; border: 1px solid #000; padding: 0 3px; font: italic 11px/16px "Open Sans", sans-serif; background: #fff; margin-right: 1px; }
.keyword::placeholder { color: #666; opacity: 1; }
.account .user { width: 80px; padding-left: 2px; justify-items: start; font-size: 11px; }
.account .user + .dd { width: 16px; }
.winctl { display: flex; height: 24px; gap: 6px; padding-right: 1px; }
.winctl button { width: 20px; }
.winctl svg { width: 20px; height: 20px; margin-top: 2px; }

.tabs { display: flex; height: 20px; flex: none; }
.tabs button { padding: 0 9px; white-space: nowrap; line-height: 20px; }
.tabs .file { width: 45px; margin-right: 3px; background: #2579b2; color: #fff; }
.tabs .current { background: #eee; }
.tabs .fold { padding-left: 22px; }
.fold svg { width: 28px; height: 12px; }

.ribbon { display: flex; height: 96px; flex: none; background: #eee; border-bottom: 1px solid #c4c4c4; overflow: hidden; }
.panel { display: flex; flex-direction: column; border-right: 1px solid #dcdcdc; flex: none; }
.panel h2 { height: 18px; line-height: 18px; text-align: center; margin-bottom: 1px; white-space: nowrap; }
.tools { flex: 1; display: grid; justify-content: center; align-items: start; padding-top: 6px; }
.tools button { display: flex; flex-direction: column; align-items: center; justify-content: flex-start; font-size: 11px; line-height: 15px; color: #a0a0a0; white-space: nowrap; position: relative; }
.tools svg { width: 32px; height: 32px; margin-bottom: 4px; }
.drop::after { content: ""; position: absolute; right: 2px; bottom: 10px; border: 3px solid transparent; border-top-color: #888; border-bottom: 0; }
.select { width: 57px; }
.sel-caret { display: inline-block; width: 8px; height: 6px; margin-left: 3px; }
.properties { width: 83px; }
.properties .tools { grid-template-columns: 38px 38px; grid-auto-rows: 34px; row-gap: 2px; padding-top: 4px; }
.properties button { height: 34px; justify-content: center; }
.properties svg { width: 30px; height: 30px; margin: 0; }
.properties .on { background: #bcd8f0; border: 1px solid #5b8fc4; }
.forms { width: 275px; }
.forms .tools { grid-template-columns: 48px 44px 42px 44px 40px 50px; padding-left: 4px; }
.model { width: 261px; }
.model .tools { grid-template-columns: 44px 66px 44px 50px 55px; }
.control { width: 51px; }
.connectors { width: 317px; }
.connectors .tools { grid-template-columns: repeat(5, 62px); }
.datum { width: 123px; }
.datum .tools { grid-template-columns: 60px 58px; }
.workplane { width: 125px; border-right: 0; }
.workplane .tools { grid-template-columns: 40px 38px 40px; justify-content: start; padding-left: 2px; }
.editor { width: 156px; border-right: 0; }
.editor .tools { grid-template-columns: 58px 98px; }
.editor h2 { background: #c6c6e2; }

.options { height: 27px; flex: none; background: #eee; }
.viewtabs { display: flex; height: 21px; flex: none; padding-top: 1px; }
.viewtabs button { width: 128px; display: flex; align-items: center; padding: 0 4px; color: #a0a0a0; }
.viewtabs svg { width: 16px; height: 16px; margin-right: 7px; }
.viewtabs .current { background: #fff; font-weight: 700; color: #b4b4b4; }
.viewtabs .x { width: 12px; height: 12px; margin: 0 0 0 auto; }
.viewtabs .more { width: 12px; height: 12px; margin: 4px 2px 0 auto; }

.canvas { flex: 1; min-height: 0; position: relative; background: #fff; display: flex; justify-content: space-between; }
.model-view { width: 930px; height: 613px; margin: 85px 0 0 130px; shape-rendering: crispEdges; }
.vscroll { width: 17px; background: #e9e9e9; display: flex; flex-direction: column; align-items: center; padding: 4px 0; }
.vscroll svg { width: 14px; height: 14px; }
.thumb { width: 15px; height: 17px; background: #c4c4c4; margin: auto 0; }

.dialog {
  position: absolute; top: 11px; right: 17px; width: 805px; height: 773px;
  display: flex; flex-direction: column;
  background: #f0f0f0; border: 1px solid #666; box-shadow: 0 4px 14px rgba(0, 0, 0, .35);
  font-size: 11px; color: #111;
}
.dialog header { display: flex; justify-content: space-between; align-items: center; height: 29px; padding: 0 9px 0 8px; background: #fff; }
.dialog header svg { width: 11px; height: 11px; }
.typename { display: flex; align-items: center; height: 21px; margin: 13px 12px 0 11px; }
.typename label { width: 70px; }
.selwrap { flex: 1; position: relative; height: 21px; margin-right: 8px; }
.selwrap select { width: 100%; height: 100%; appearance: none; border: 1px solid #c0c0c0; border-radius: 0; background: #ccc; }
.selwrap svg { position: absolute; right: 4px; top: 7px; width: 10px; height: 8px; }
.typename button { width: 18px; margin-right: 12px; }
.typename button:last-child { margin-right: 5px; }
.typename button svg, .actions svg { width: 18px; height: 18px; }
.dim { opacity: .5; }
.search { display: flex; align-items: center; height: 20px; margin: 12px 10px 0 11px; background: #fff; border: 1px solid #777; }
.search input { flex: 1; border: 0; padding: 0 2px; background: none; font: inherit; height: 16px; outline: 0; }
.search input::placeholder { color: #444; opacity: 1; }
.search svg { width: 18px; height: 18px; }
.grid { margin: 10px 13px 0 12px; border: 1px solid #777; border-right: 0; border-bottom: 0; background: #fff; flex: none; }
table { width: 100%; table-layout: fixed; border-collapse: separate; border-spacing: 0; }
.c-par, .c-val { width: 236px; }
.c-lock { width: 57px; }
thead th { height: 21px; padding: 0; font-weight: 400; background: #f0f0f0; border-right: 1px solid #222; border-bottom: 1px solid #111; }
tbody td { height: 18px; padding: 0 0 2px 2px; line-height: 15px; border-right: 1px dotted #777; border-bottom: 1px dotted #777; white-space: nowrap; }
tbody td + td { padding-left: 1px; }
td input { appearance: none; display: block; width: 13px; height: 13px; margin: 3px 0 -2px 2px; border: 1px solid #333; background: #fff; }
tbody td.editing { border: 1px solid #111; padding-bottom: 1px; }
.group th { height: 22px; padding: 0; line-height: 19px; text-align: left; font-weight: 600; text-indent: 2px; border-top: 3px solid #fff; background: #9ab3cf; position: relative; }
.group svg { position: absolute; right: 4px; top: 3px; width: 10px; height: 12px; }
.group .flip { transform: rotate(180deg); }
.calc td:nth-child(-n+2) { color: #808080; }
.blank td { height: 161px; }
.actions { display: flex; align-items: center; height: 22px; margin: 12px 12px 0 14px; }
.actions button:not(.btn) { width: 18px; margin-right: 12px; }
.actions .sort { margin-left: 13px; }
.btn { height: 22px; width: 77px; border: 1px solid #adadad; background: #e1e1e1; }
.btn.lookup { width: 125px; margin-left: auto; }
.btn.primary { border: 2px solid #1b77b8; }
.dialog footer { display: flex; gap: 7px; margin: 15px 12px 0 10px; }
.dialog footer a { color: #1f66b5; margin-right: auto; line-height: 14px; height: 14px; }
.grip { width: 10px; height: 10px; }
.dialog .grip { margin: auto 1px 1px auto; }

.viewbar { display: flex; align-items: center; height: 18px; flex: none; background: #eee; border-bottom: 2px solid #fff; padding-right: 2px; }
.viewbar button { width: 21px; flex: none; display: grid; place-items: center; }
.viewbar button svg { width: 18px; height: 16px; }
.viewbar .scale { width: 77px; padding-left: 8px; }
.viewbar .narrow svg { width: 12px; }
.track { flex: 1; height: 16px; display: flex; justify-content: center; padding-right: 5px; }
.track span { width: 17px; height: 14px; margin-top: 1px; background: #c8c8c8; }
.status { display: flex; justify-content: space-between; align-items: center; height: 24px; flex: none; padding: 0 70px 0 1px; border-top: 1px solid #c4c4c4; }
.filters { display: flex; align-items: center; gap: 8px; font-size: 11px; }
.filters svg { width: 18px; height: 18px; }
.filters span { margin-left: -8px; }
```
